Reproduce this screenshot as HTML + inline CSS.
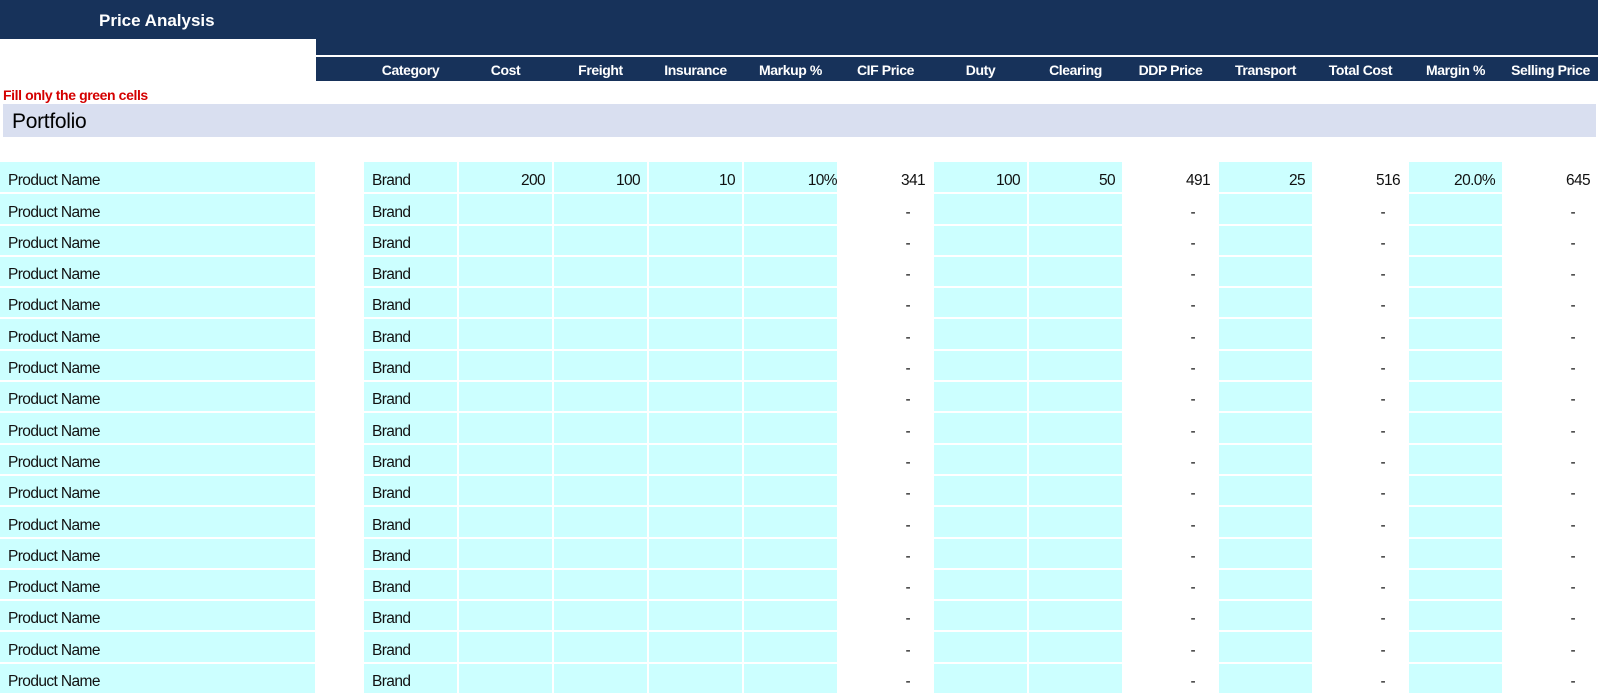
<!DOCTYPE html>
<html><head><meta charset="utf-8"><style>
html,body{margin:0;padding:0;background:#fff;width:1600px;height:694px;overflow:hidden;position:relative;font-family:"Liberation Sans Narrow","Liberation Sans",sans-serif;}
.nav{position:absolute;background:#17325a;}
.title{position:absolute;left:99px;top:11px;color:#fff;font:bold 17px "Liberation Sans",sans-serif;}
.hdr{position:absolute;top:57px;left:363px;height:24px;display:flex;}
.hdr div{width:95px;text-align:center;color:#fff;font:bold 14px "Liberation Sans",sans-serif;line-height:26px;letter-spacing:-0.4px;white-space:nowrap;}
.red{position:absolute;left:3px;top:87px;color:#d40000;font:bold 14px "Liberation Sans Narrow","Liberation Sans",sans-serif;letter-spacing:-0.4px;}
.port{position:absolute;left:3px;top:104px;width:1593px;height:33px;background:#d9dff0;}
.port span{position:absolute;left:9px;top:6px;font:21px "Liberation Sans",sans-serif;color:#000;letter-spacing:-0.3px;}
table{position:absolute;left:0;top:162px;border-collapse:collapse;table-layout:fixed;width:1598px;}
tr{height:31.3px;}
td{height:27.3px;padding:0 0 2px 0;border-right:2px solid #fff;border-bottom:2px solid #fff;font-size:15.5px;letter-spacing:-0.6px;color:#111;vertical-align:bottom;white-space:nowrap;overflow:hidden;line-height:18px;}
td.c{background:#ccffff;}
td.l{padding-left:8px;}
td.r{text-align:right;padding-right:7px;}
td.d{text-align:right;padding-right:22px;}
</style></head><body>
<div class="nav" style="left:0;top:0;width:1598px;height:39px"></div>
<div class="nav" style="left:316px;top:39px;width:1282px;height:16px"></div>
<div class="nav" style="left:316px;top:57px;width:1282px;height:24px"></div>
<div class="title">Price Analysis</div>
<div class="hdr"><div>Category</div><div>Cost</div><div>Freight</div><div>Insurance</div><div>Markup %</div><div>CIF Price</div><div>Duty</div><div>Clearing</div><div>DDP Price</div><div>Transport</div><div>Total Cost</div><div>Margin %</div><div>Selling Price</div></div>
<div class="red">Fill only the green cells</div>
<div class="port"><span>Portfolio</span></div>
<table>
<colgroup><col style="width:316px"><col style="width:47px"><col style="width:95px"><col style="width:95px"><col style="width:95px"><col style="width:95px"><col style="width:95px"><col style="width:95px"><col style="width:95px"><col style="width:95px"><col style="width:95px"><col style="width:95px"><col style="width:95px"><col style="width:95px"><col style="width:95px"></colgroup>
<tr><td class="c l">Product Name</td><td></td><td class="c l">Brand</td><td class="c r">200</td><td class="c r">100</td><td class="c r">10</td><td class="c r" style="padding-right:0">10%</td><td class="r">341</td><td class="c r">100</td><td class="c r">50</td><td class="r">491</td><td class="c r">25</td><td class="r">516</td><td class="c r">20.0%</td><td class="r">645</td></tr>
<tr><td class="c l">Product Name</td><td></td><td class="c l">Brand</td><td class="c"></td><td class="c"></td><td class="c"></td><td class="c"></td><td class="d">-</td><td class="c"></td><td class="c"></td><td class="d">-</td><td class="c"></td><td class="d">-</td><td class="c"></td><td class="d">-</td></tr>
<tr><td class="c l">Product Name</td><td></td><td class="c l">Brand</td><td class="c"></td><td class="c"></td><td class="c"></td><td class="c"></td><td class="d">-</td><td class="c"></td><td class="c"></td><td class="d">-</td><td class="c"></td><td class="d">-</td><td class="c"></td><td class="d">-</td></tr>
<tr><td class="c l">Product Name</td><td></td><td class="c l">Brand</td><td class="c"></td><td class="c"></td><td class="c"></td><td class="c"></td><td class="d">-</td><td class="c"></td><td class="c"></td><td class="d">-</td><td class="c"></td><td class="d">-</td><td class="c"></td><td class="d">-</td></tr>
<tr><td class="c l">Product Name</td><td></td><td class="c l">Brand</td><td class="c"></td><td class="c"></td><td class="c"></td><td class="c"></td><td class="d">-</td><td class="c"></td><td class="c"></td><td class="d">-</td><td class="c"></td><td class="d">-</td><td class="c"></td><td class="d">-</td></tr>
<tr><td class="c l">Product Name</td><td></td><td class="c l">Brand</td><td class="c"></td><td class="c"></td><td class="c"></td><td class="c"></td><td class="d">-</td><td class="c"></td><td class="c"></td><td class="d">-</td><td class="c"></td><td class="d">-</td><td class="c"></td><td class="d">-</td></tr>
<tr><td class="c l">Product Name</td><td></td><td class="c l">Brand</td><td class="c"></td><td class="c"></td><td class="c"></td><td class="c"></td><td class="d">-</td><td class="c"></td><td class="c"></td><td class="d">-</td><td class="c"></td><td class="d">-</td><td class="c"></td><td class="d">-</td></tr>
<tr><td class="c l">Product Name</td><td></td><td class="c l">Brand</td><td class="c"></td><td class="c"></td><td class="c"></td><td class="c"></td><td class="d">-</td><td class="c"></td><td class="c"></td><td class="d">-</td><td class="c"></td><td class="d">-</td><td class="c"></td><td class="d">-</td></tr>
<tr><td class="c l">Product Name</td><td></td><td class="c l">Brand</td><td class="c"></td><td class="c"></td><td class="c"></td><td class="c"></td><td class="d">-</td><td class="c"></td><td class="c"></td><td class="d">-</td><td class="c"></td><td class="d">-</td><td class="c"></td><td class="d">-</td></tr>
<tr><td class="c l">Product Name</td><td></td><td class="c l">Brand</td><td class="c"></td><td class="c"></td><td class="c"></td><td class="c"></td><td class="d">-</td><td class="c"></td><td class="c"></td><td class="d">-</td><td class="c"></td><td class="d">-</td><td class="c"></td><td class="d">-</td></tr>
<tr><td class="c l">Product Name</td><td></td><td class="c l">Brand</td><td class="c"></td><td class="c"></td><td class="c"></td><td class="c"></td><td class="d">-</td><td class="c"></td><td class="c"></td><td class="d">-</td><td class="c"></td><td class="d">-</td><td class="c"></td><td class="d">-</td></tr>
<tr><td class="c l">Product Name</td><td></td><td class="c l">Brand</td><td class="c"></td><td class="c"></td><td class="c"></td><td class="c"></td><td class="d">-</td><td class="c"></td><td class="c"></td><td class="d">-</td><td class="c"></td><td class="d">-</td><td class="c"></td><td class="d">-</td></tr>
<tr><td class="c l">Product Name</td><td></td><td class="c l">Brand</td><td class="c"></td><td class="c"></td><td class="c"></td><td class="c"></td><td class="d">-</td><td class="c"></td><td class="c"></td><td class="d">-</td><td class="c"></td><td class="d">-</td><td class="c"></td><td class="d">-</td></tr>
<tr><td class="c l">Product Name</td><td></td><td class="c l">Brand</td><td class="c"></td><td class="c"></td><td class="c"></td><td class="c"></td><td class="d">-</td><td class="c"></td><td class="c"></td><td class="d">-</td><td class="c"></td><td class="d">-</td><td class="c"></td><td class="d">-</td></tr>
<tr><td class="c l">Product Name</td><td></td><td class="c l">Brand</td><td class="c"></td><td class="c"></td><td class="c"></td><td class="c"></td><td class="d">-</td><td class="c"></td><td class="c"></td><td class="d">-</td><td class="c"></td><td class="d">-</td><td class="c"></td><td class="d">-</td></tr>
<tr><td class="c l">Product Name</td><td></td><td class="c l">Brand</td><td class="c"></td><td class="c"></td><td class="c"></td><td class="c"></td><td class="d">-</td><td class="c"></td><td class="c"></td><td class="d">-</td><td class="c"></td><td class="d">-</td><td class="c"></td><td class="d">-</td></tr>
<tr><td class="c l">Product Name</td><td></td><td class="c l">Brand</td><td class="c"></td><td class="c"></td><td class="c"></td><td class="c"></td><td class="d">-</td><td class="c"></td><td class="c"></td><td class="d">-</td><td class="c"></td><td class="d">-</td><td class="c"></td><td class="d">-</td></tr>
</table>
</body></html>
